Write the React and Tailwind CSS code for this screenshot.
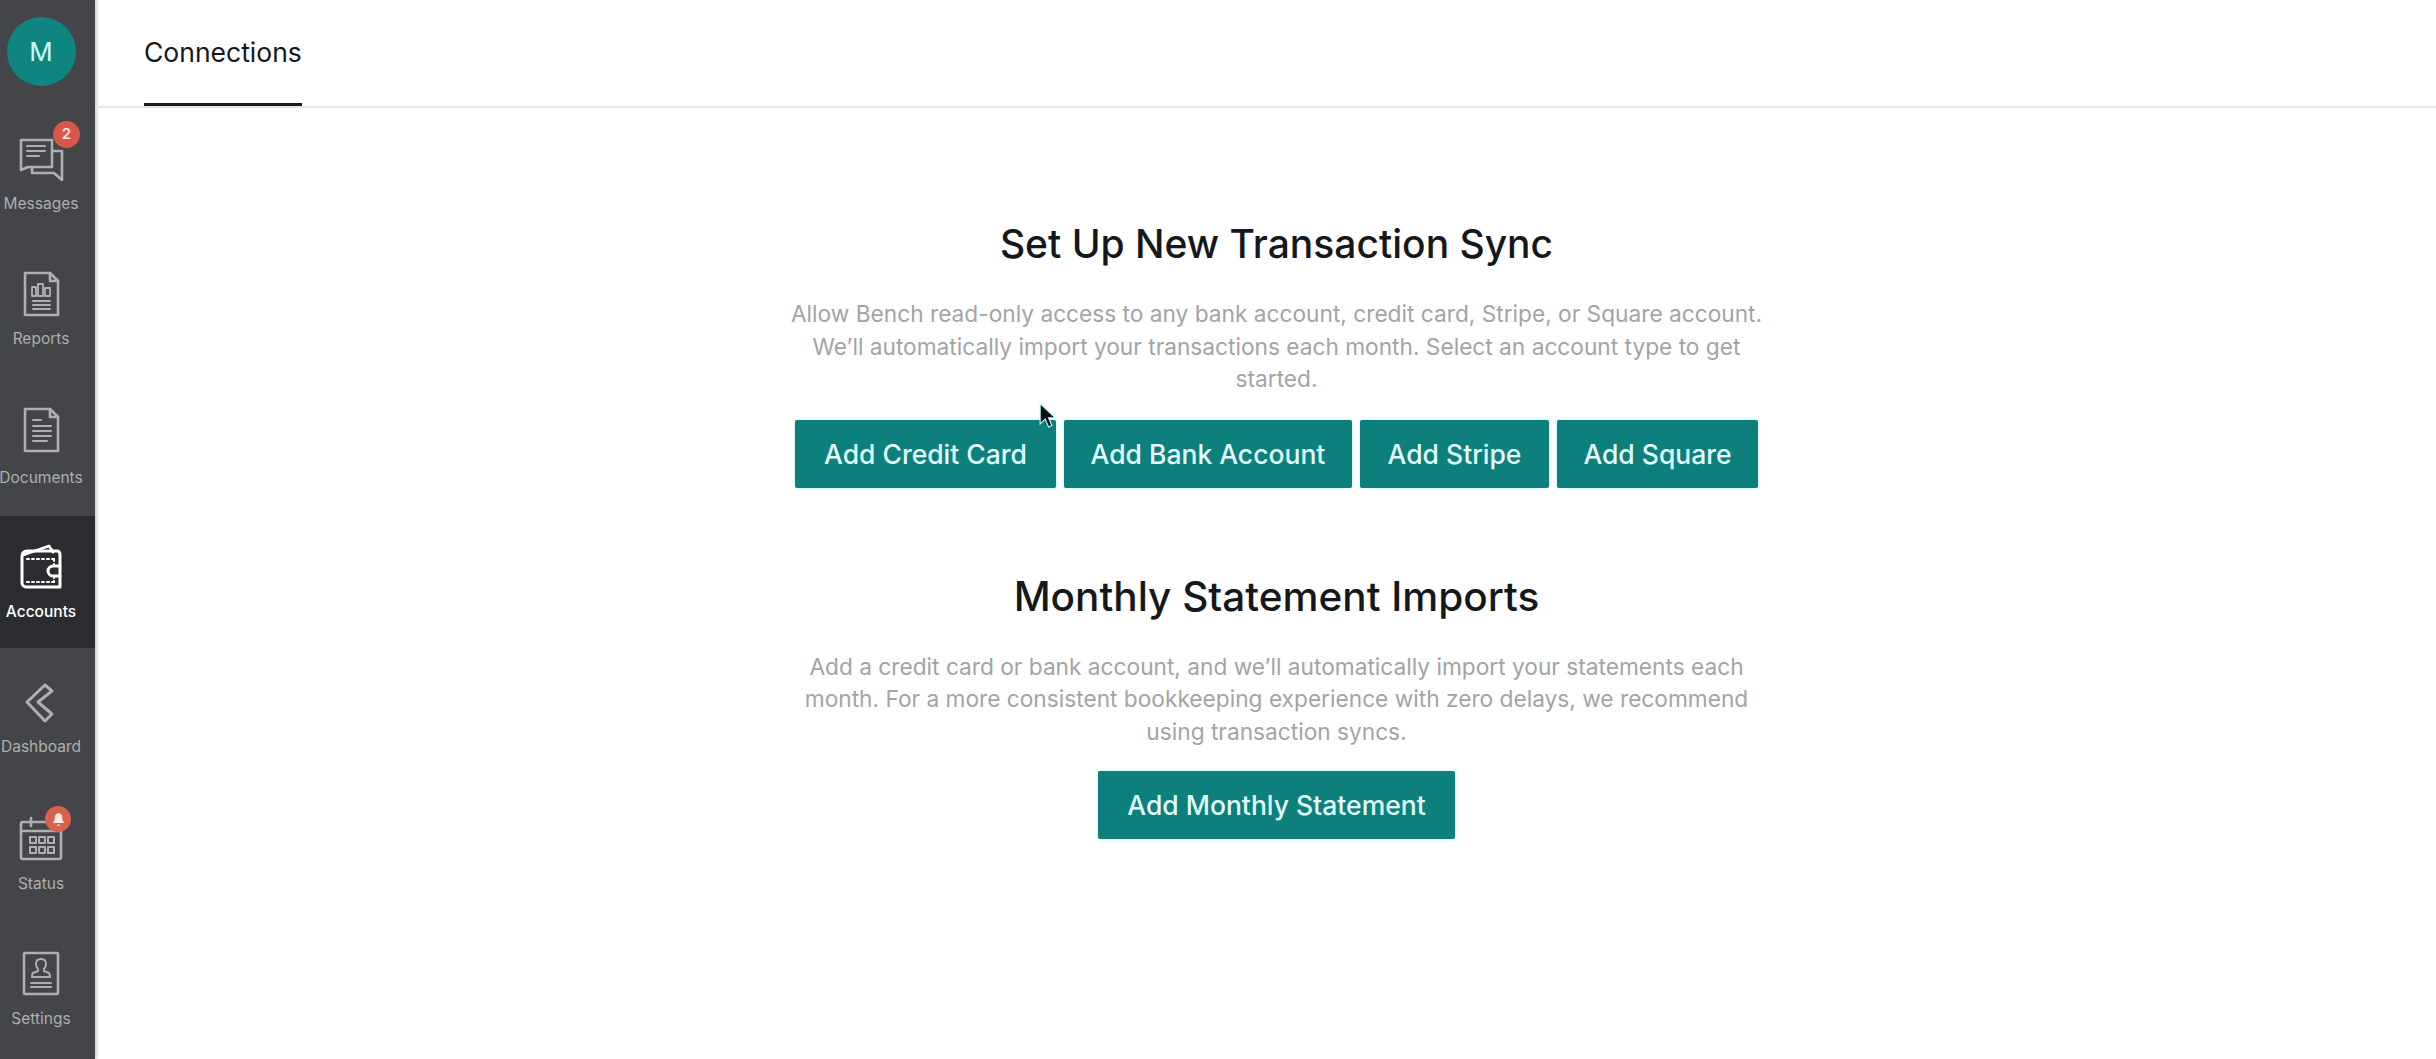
const FONT = "font-['Inter','Liberation_Sans',sans-serif]";

function Svg({ children, className = "", box = "0 0 48 48" }) {
  return (
    <svg viewBox={box} fill="none" stroke="currentColor" strokeWidth="2.6" strokeLinejoin="round" strokeLinecap="round" className={"block h-[48px] w-[48px] " + className}>
      {children}
    </svg>
  );
}

const MessagesIcon = () => (
  <Svg>
    <path d="M4 5h31v27H11l-7 3z" />
    <path d="M36 16h9v29l-8-7H15v-6" />
    <path d="M10 11h18M10 16h18M10 21h12" strokeWidth="2" />
  </Svg>
);
const ReportsIcon = () => (
  <Svg>
    <path d="M8 3h25l8 8v34H8z" />
    <path d="M33 3v8h8" />
    <path d="M15 17h4v9h-4zM21 14h5v12h-5zM28 18h5v8h-5z" strokeWidth="1.8" />
    <path d="M16 31h17M16 35h17M16 39h17" strokeWidth="2" />
  </Svg>
);
const DocumentsIcon = () => (
  <Svg>
    <path d="M8 3h25l8 8v34H8z" />
    <path d="M33 3v8h8" />
    <path d="M16 14h8M16 20h18M16 25h18M16 30h18M16 35h14" strokeWidth="2" />
  </Svg>
);
const WalletIcon = () => (
  <Svg>
    <path d="M5 13c0-3 2-5 5-5h30c2 0 3 2 3 4v32H9c-2 0-4-2-4-4z" strokeWidth="3" />
    <path d="M6 12l26-9 4 6" strokeWidth="2.8" />
    <path d="M10 16h27M10 39h27" strokeWidth="2" strokeDasharray="2 3" />
    <path d="M43 23h-7a4 4 0 0 0 0 10h7" strokeWidth="3" />
    <path d="M37 16v7M37 33v6" strokeWidth="2" strokeDasharray="2 3" />
  </Svg>
);
const DashboardIcon = () => (
  <Svg>
    <path d="M10 24L28 7l7 6-14 11 14 12-7 7z" strokeWidth="3" />
  </Svg>
);
const StatusIcon = () => (
  <Svg>
    <rect x="4" y="7" width="40" height="37" rx="2" />
    <path d="M4 16h40M14 3v8" />
    <path d="M13 22h6v6h-6zM22 22h6v6h-6zM31 22h6v6h-6zM13 32h6v6h-6zM22 32h6v6h-6zM31 32h6v6h-6z" strokeWidth="2" />
  </Svg>
);
const SettingsIcon = () => (
  <Svg>
    <rect x="7" y="3" width="34" height="41" rx="1" />
    <path d="M24 9c-4 0-5 3-5 5 0 2 1 4 2 5v2l-5 2c-1 1-1 2-1 4h18c0-2 0-3-1-4l-5-2v-2c1-1 2-3 2-5 0-2-1-5-5-5z" strokeWidth="2" />
    <path d="M14 33h20M14 37h20" strokeWidth="2" />
  </Svg>
);

function NavItem({ icon, label, active, height, gap = "mt-[11px]", badge }) {
  return (
    <div className={height + " flex w-[82px] flex-col items-center justify-center " + (active ? "text-white" : "text-[#adafb1]")}>
      <div className="relative">
        {icon}
        {badge}
      </div>
      <div className={gap + " whitespace-nowrap text-[15.5px] leading-[20px]" + (active ? " font-medium" : "")}>{label}</div>
    </div>
  );
}

function Button({ width, children }) {
  return (
    <button className={width + " flex h-[68px] items-center justify-center whitespace-nowrap rounded-[2px] bg-[#0d807d] pt-[2px] text-[26.5px] font-medium text-[#e2fffb] shadow-[0_0_3px_#a5f0ee]"}>
      {children}
    </button>
  );
}

function Section({ title, titleSize, lines, className, children }) {
  return (
    <section className={"flex flex-col items-center " + className}>
      <h2 className={titleSize + " font-medium leading-[50px] text-[#15181b]"}>{title}</h2>
      <p className="mt-[29px] text-center text-[22.7px] leading-[32.5px] text-[#a2a4a6]">
        {lines.map((l) => (
          <span key={l} className="block whitespace-nowrap">{l}</span>
        ))}
      </p>
      {children}
    </section>
  );
}

export default function App() {
  return (
    <div className={"flex h-[1059px] w-[2436px] overflow-hidden bg-white " + FONT}>
      <aside className="relative flex w-[95px] shrink-0 flex-col overflow-hidden bg-[#434548] shadow-[2px_0_3px_rgba(0,0,0,0.2)]">
        <div className="flex h-[107px] w-[82px] items-start justify-center pt-[17px]">
          <div className="flex h-[69px] w-[69px] items-center justify-center rounded-full bg-[#0e8580] text-[26px] text-[#c9fff8]">M</div>
        </div>
        <NavItem height="h-[135px]" icon={<MessagesIcon />} label="Messages" badge={
          <span className="absolute right-[-15px] top-[-14px] flex h-[27px] w-[27px] items-center justify-center rounded-full bg-[#d9574a] text-[15px] font-semibold text-[#ffe9e4]">2</span>
        } />
        <NavItem height="h-[135px]" icon={<ReportsIcon />} label="Reports" />
        <NavItem height="h-[139px]" gap="mt-[14px]" icon={<DocumentsIcon />} label="Documents" />
        <div className="w-full bg-[#2b2c2f]">
          <NavItem height="h-[132px]" active icon={<WalletIcon />} label="Accounts" />
        </div>
        <NavItem height="h-[139px]" icon={<DashboardIcon />} label="Dashboard" />
        <NavItem height="h-[135px]" icon={<StatusIcon />} label="Status" badge={
          <span className="absolute right-[-6px] top-[-9px] flex h-[26px] w-[26px] items-center justify-center rounded-full bg-[#d9604a] text-[#ffe9e4]">
            <svg viewBox="0 0 16 16" fill="currentColor" className="h-[15px] w-[15px]">
              <path d="M8 1.2c-2.6 0-4 2-4 4.6 0 2.6-.8 4-1.8 5.2v.8h11.6V11c-1-1.2-1.8-2.6-1.8-5.2 0-2.6-1.4-4.6-4-4.6zM6.4 13.2a1.6 1.6 0 0 0 3.2 0z" />
            </svg>
          </span>
        } />
        <NavItem height="h-[134px]" icon={<SettingsIcon />} label="Settings" />
      </aside>

      <main className="relative flex min-w-0 flex-1 flex-col">
        <header className="h-[108px] shrink-0 border-b-2 border-[#e4e5e6] pl-[49px]">
          <div className="flex h-[106px] w-fit items-start border-b-[3px] border-[#1a1c1e] pt-[34px] text-[26.5px] font-normal leading-[36px] text-[#15181b]">
            Connections
          </div>
        </header>

        <div className="flex flex-col items-center pl-[22px]">
          <Section
            className="mt-[111px]"
            titleSize="text-[39px]"
            title="Set Up New Transaction Sync"
            lines={[
              "Allow Bench read-only access to any bank account, credit card, Stripe, or Square account.",
              "We’ll automatically import your transactions each month. Select an account type to get",
              "started.",
            ]}
          >
            <div className="mt-[24px] flex gap-[8px]">
              <Button width="w-[261px]">Add Credit Card</Button>
              <Button width="w-[288px]">Add Bank Account</Button>
              <Button width="w-[189px]">Add Stripe</Button>
              <Button width="w-[201px]">Add Square</Button>
            </div>
          </Section>
          <Section
            className="mt-[84px]"
            titleSize="text-[40.5px]"
            title="Monthly Statement Imports"
            lines={[
              "Add a credit card or bank account, and we’ll automatically import your statements each",
              "month. For a more consistent bookkeeping experience with zero delays, we recommend",
              "using transaction syncs.",
            ]}
          >
            <div className="mt-[23px] flex">
              <Button width="w-[357px]">Add Monthly Statement</Button>
            </div>
          </Section>
        </div>

        <svg viewBox="0 0 16 24" className="absolute left-[944px] top-[402px] h-[28px] w-[18px]">
          <path d="M1 1v18l4.5-4.2 3 7 3-1.3-3-6.8h6z" fill="#111" stroke="#bff" strokeWidth="1" />
        </svg>
      </main>
    </div>
  );
}
